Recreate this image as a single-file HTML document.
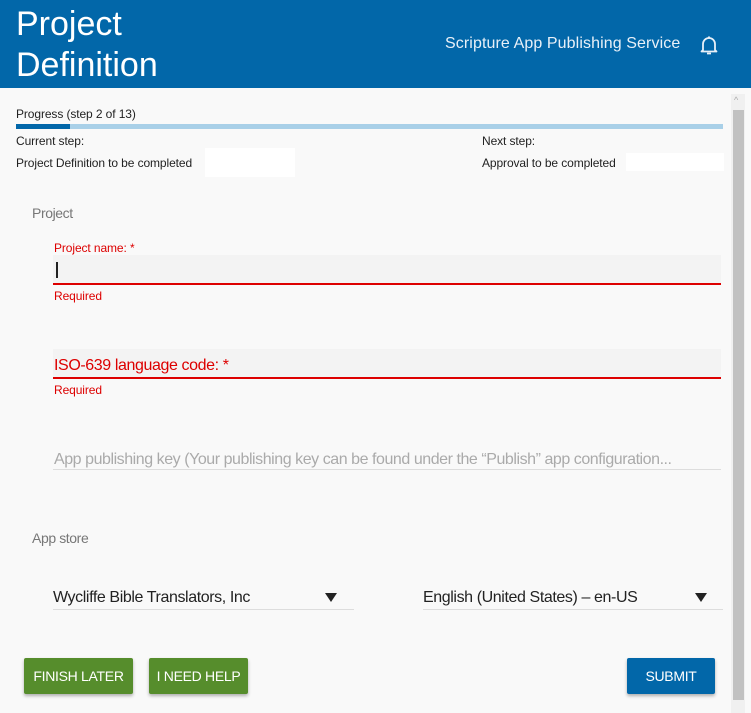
<!DOCTYPE html>
<html><head><style>
*{margin:0;padding:0;box-sizing:border-box}
body{width:751px;height:713px;overflow:hidden;background:#f9f9f9;font-family:"Liberation Sans",sans-serif;position:relative;color:#222}
.a{position:absolute;white-space:nowrap}
.hdr{position:absolute;left:0;top:0;width:751px;height:88px;background:#0267a9}
.btn{position:absolute;height:36px;top:658px;color:#fff;font-size:14px;line-height:36px;text-align:center;border-radius:2px;box-shadow:0 2px 3px rgba(0,0,0,.3);letter-spacing:-0.3px}
.n{letter-spacing:-0.4px}
.s{font-size:12px;letter-spacing:-0.1px}
</style></head><body>
<div class="hdr"></div>
<div class="a" style="left:16px;top:4px;color:#fff;font-size:34px;line-height:41px">Project<br>Definition</div>
<div class="a" style="left:445px;top:35px;color:#e8f0f8;font-size:16px;letter-spacing:0.1px">Scripture App Publishing Service</div>
<svg class="a" style="left:697px;top:33px" width="24" height="24" viewBox="0 0 24 24"><path d="M6 17V11a6 6 0 0 1 12 0v6l1.5 1.5h-15z M10 20.5h4" fill="none" stroke="#e8f0f8" stroke-width="1.8" stroke-linejoin="round"/><circle cx="12" cy="4.3" r="1" fill="#e8f0f8"/></svg>
<div class="a" style="left:731px;top:94px;width:14px;height:619px;background:#f0f0f0"></div>
<div class="a" style="left:733px;top:110px;width:11px;height:590px;background:#c1c1c1"></div>
<div class="a" style="left:734px;top:95px;font-size:9px;color:#aaa">^</div>
<div class="a s" style="left:16px;top:107px">Progress (step 2 of 13)</div>
<div class="a" style="left:16px;top:124px;width:707px;height:5px;background:#a9d0e8"></div>
<div class="a" style="left:16px;top:124px;width:54px;height:5px;background:#0267a9"></div>
<div class="a s" style="left:16px;top:134px">Current step:</div>
<div class="a s" style="left:16px;top:156px">Project Definition to be completed</div>
<div class="a" style="left:205px;top:148px;width:90px;height:29px;background:#fff"></div>
<div class="a s" style="left:482px;top:134px">Next step:</div>
<div class="a s" style="left:482px;top:156px">Approval to be completed</div>
<div class="a" style="left:626px;top:153px;width:98px;height:18px;background:#fff"></div>
<div class="a n" style="left:32px;top:205px;font-size:14px;color:#777">Project</div>
<div class="a s" style="left:54px;top:241px;color:#d00">Project name: *</div>
<div class="a" style="left:53px;top:255px;width:668px;height:30px;background:#f3f3f3;border-bottom:2px solid #d00"></div>
<div class="a" style="left:56px;top:262px;width:2px;height:16px;background:#222"></div>
<div class="a s" style="left:54px;top:289px;color:#d00">Required</div>
<div class="a" style="left:53px;top:349px;width:668px;height:30px;background:#f3f3f3;border-bottom:2px solid #d00"></div>
<div class="a n" style="left:54px;top:357px;font-size:16px;color:#d00">ISO-639 language code: *</div>
<div class="a s" style="left:54px;top:383px;color:#d00">Required</div>
<div class="a n" style="left:54px;top:451px;font-size:16px;color:#aaa;letter-spacing:-0.45px">App publishing key (Your publishing key can be found under the “Publish” app configuration...</div>
<div class="a" style="left:53px;top:469px;width:668px;height:1px;background:#ddd"></div>
<div class="a n" style="left:32px;top:530px;font-size:14px;color:#777">App store</div>
<div class="a n" style="left:53px;top:589px;font-size:16px">Wycliffe Bible Translators, Inc</div>
<svg class="a" style="left:325px;top:593px" width="12" height="9"><path d="M0 0h12L6 9z" fill="#222"/></svg>
<div class="a" style="left:53px;top:609px;width:301px;height:1px;background:#ddd"></div>
<div class="a n" style="left:423px;top:589px;font-size:16px">English (United States) – en-US</div>
<svg class="a" style="left:695px;top:593px" width="12" height="9"><path d="M0 0h12L6 9z" fill="#222"/></svg>
<div class="a" style="left:423px;top:609px;width:300px;height:1px;background:#ddd"></div>
<div class="btn" style="left:24px;width:109px;background:#568d2c">FINISH LATER</div>
<div class="btn" style="left:149px;width:99px;background:#568d2c">I NEED HELP</div>
<div class="btn" style="left:627px;width:88px;background:#0267a9">SUBMIT</div>
</body></html>
